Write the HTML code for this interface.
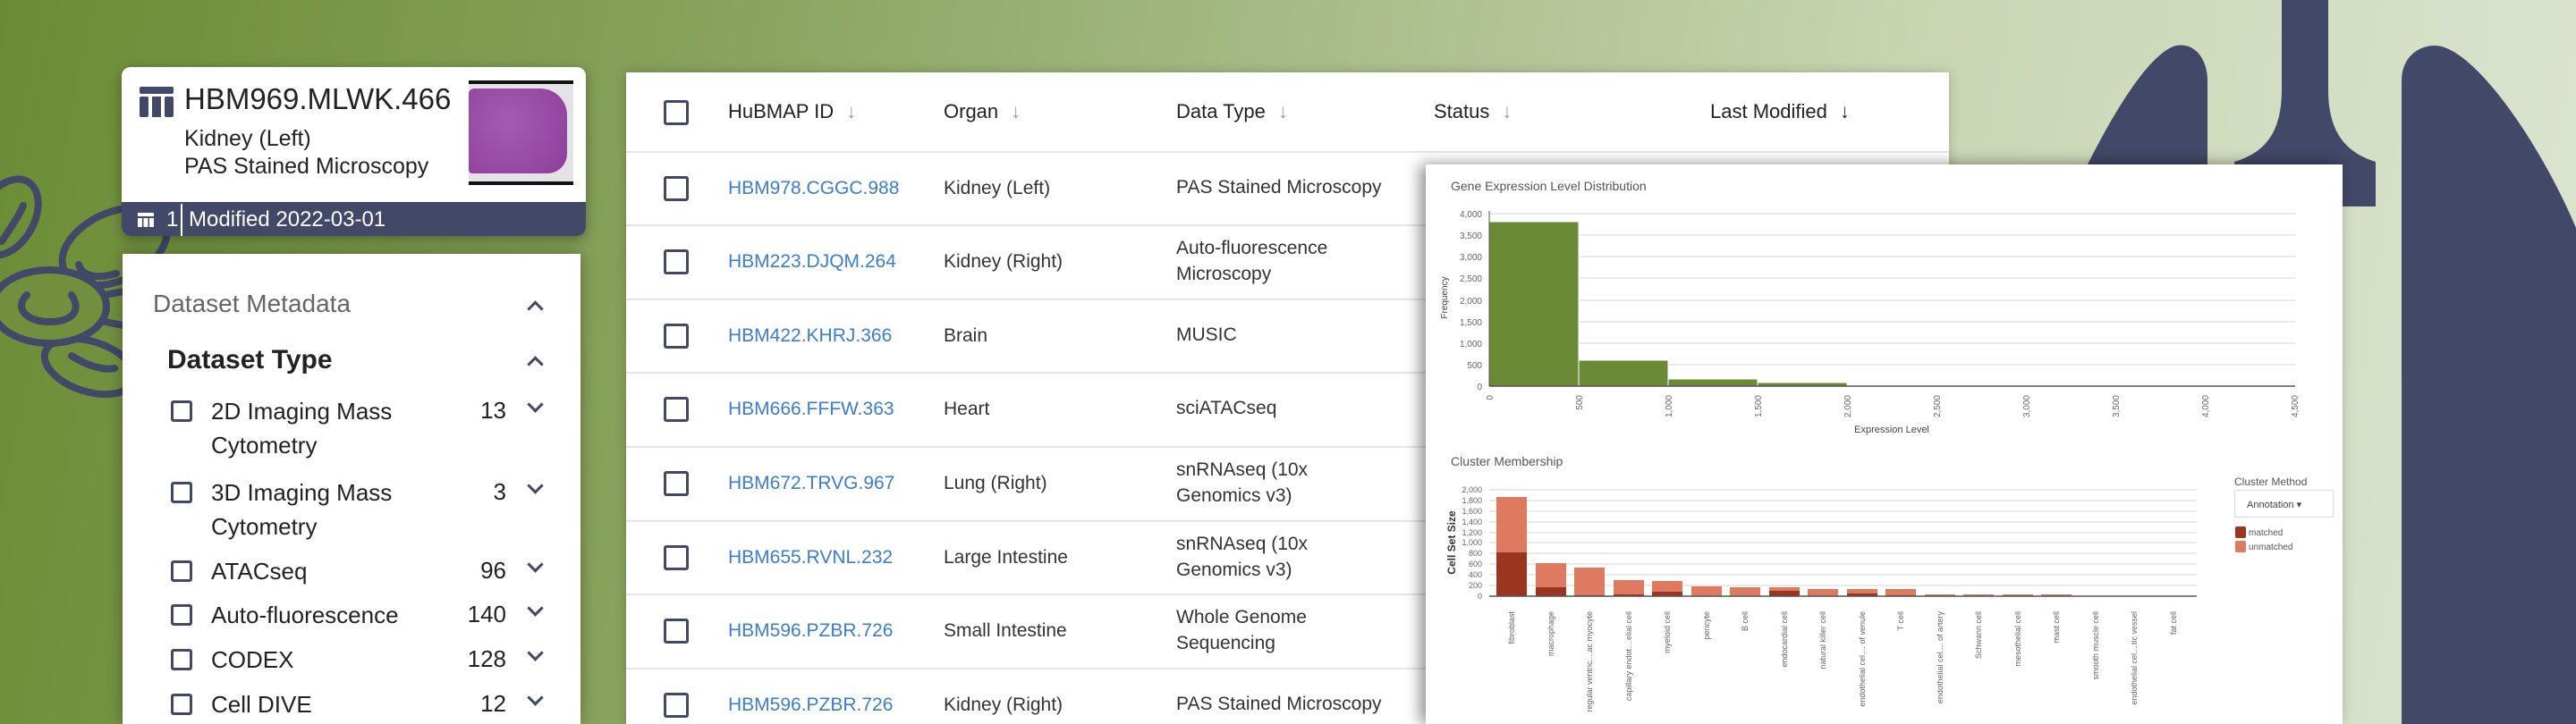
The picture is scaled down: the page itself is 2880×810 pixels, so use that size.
<!DOCTYPE html>
<html style="width:2880px;height:810px;overflow:hidden"><head><meta charset="utf-8">
<style>
*{margin:0;padding:0;box-sizing:border-box}
body{width:2880px;height:810px;overflow:hidden;position:relative;font-family:"Liberation Sans",sans-serif;
background:linear-gradient(100deg,#6b8c35 0%,#86a15a 25%,#a9bd8a 50%,#c9d6b3 72%,#dde5d2 100%);}
.abs{position:absolute}
.card{left:136px;top:75px;width:519px;height:189px;background:#fff;border-radius:10px;overflow:hidden;box-shadow:0 4px 14px rgba(0,0,0,.35)}
.bar{position:absolute;left:0;top:151px;width:519px;height:38px;background:#424867;color:#fff;font-size:24px}
.filt{left:137px;top:284px;width:512px;height:526px;background:#fff;box-shadow:0 0 16px rgba(0,0,0,.35)}
.cb{position:absolute;width:24px;height:24px;border:3px solid #424867;border-radius:3px}
.lbl{position:absolute;font-size:26px;color:#222;line-height:38px}
.cnt{position:absolute;font-size:26px;color:#222;right:83px;text-align:right}
.chev{position:absolute;left:455px;width:13px;height:13px;border-right:3px solid #424867;border-bottom:3px solid #424867;transform:rotate(45deg)}
.chevu{position:absolute;left:455px;width:13px;height:13px;border-left:3px solid #424867;border-top:3px solid #424867;transform:rotate(45deg)}
.table{left:700px;top:81px;width:1479px;height:729px;background:#fff;box-shadow:0 0 12px rgba(0,0,0,.2);overflow:hidden}
.th{position:absolute;top:31px;font-size:22px;color:#222}
.th span{color:#999;margin-left:14px}
.row{position:absolute;left:0;width:1479px;height:83px;border-top:2px solid #e6e6e6;font-size:21px;color:#333}
.row div{position:absolute}
.row .id{left:114px;color:#3a7dd1}
.row .org{left:355px}
.row .dt{left:615px;line-height:29px}
.tcb{position:absolute;left:42px;width:28px;height:28px;border:3px solid #424867;border-radius:3px}
.chart{left:1594px;top:184px;width:1025px;height:626px;background:#fff;box-shadow:-6px 0 16px rgba(0,0,0,.45)}
</style></head><body>

<svg class="abs" style="left:0;top:0" width="2880" height="810" viewBox="0 0 2880 810">
 <g fill="#424867">
  <path d="M2270,330 C2320,200 2390,62 2433,51 C2455,47 2468,68 2468,90 L2468,810 L2250,810 Z"/>
  <path d="M2551,0 L2603,0 L2603,100 C2603,145 2620,170 2656,181 L2656,231 L2498,231 L2498,181 C2535,170 2551,145 2551,100 Z"/>
  <path d="M2685,90 C2685,65 2703,51 2722,51 C2765,51 2840,160 2880,255 L2880,810 L2685,810 Z"/>
 </g>
 <g fill="none" stroke="#424867" stroke-width="8" stroke-linecap="round">
  <ellipse cx="8" cy="243" rx="30" ry="46" transform="rotate(30 8 243)"/>
  <path d="M2,270 C12,255 22,240 26,230"/>
  <ellipse cx="128" cy="276" rx="62" ry="38" transform="rotate(-25 128 276)"/>
  <path d="M88,296 C92,310 110,312 130,306"/>
  <ellipse cx="100" cy="410" rx="52" ry="28" transform="rotate(18 100 410)"/>
  <path d="M80,398 C95,408 115,415 128,412"/>
  <ellipse cx="55" cy="343" rx="64" ry="41" fill="#718f3d"/>
  <path d="M30,330 C15,345 30,360 55,360 C80,360 92,348 80,330"/>
  <path d="M118,330 C140,325 165,322 180,322"/>
  <path d="M118,360 C140,365 160,368 180,368"/>
  <path d="M150,290 C165,285 178,288 182,300"/>
 </g>
</svg>

<div class="abs card">
 <svg class="abs" style="left:20px;top:22px" width="38" height="34" viewBox="0 0 38 34"><rect x="0" y="0" width="38" height="8" rx="2" fill="#424867"/><rect x="0" y="11" width="10" height="23" rx="2" fill="#424867"/><rect x="14" y="11" width="10" height="23" fill="#424867"/><rect x="28" y="11" width="10" height="23" rx="2" fill="#424867"/></svg>
 <div class="abs" style="left:70px;top:17px;font-size:33px;color:#222">HBM969.MLWK.466</div>
 <div class="abs" style="left:70px;top:66px;font-size:25px;color:#222">Kidney (Left)</div>
 <div class="abs" style="left:70px;top:97px;font-size:25px;color:#222">PAS Stained Microscopy</div>
 <div class="abs" style="left:388px;top:15px;width:117px;height:117px;background:#e4e2e6;border-top:4px solid #111;border-bottom:4px solid #111">
  <div class="abs" style="left:0;top:5px;width:110px;height:95px;background:radial-gradient(circle at 40% 40%,#a45bb0,#8d3f9b);border-radius:6px 30px 22px 4px"></div>
 </div>
 <div class="bar">
  <svg class="abs" style="left:18px;top:12px" width="18" height="16" viewBox="0 0 18 16"><rect width="18" height="4" fill="#fff"/><rect y="6" width="5" height="10" fill="#fff"/><rect x="6.5" y="6" width="5" height="10" fill="#fff"/><rect x="13" y="6" width="5" height="10" fill="#fff"/></svg>
  <div class="abs" style="left:50px;top:6px">1</div>
  <div class="abs" style="left:66px;top:2px;width:2px;height:36px;background:#fff"></div>
  <div class="abs" style="left:75px;top:6px">Modified 2022-03-01</div>
 </div>
</div>

<div class="abs filt">
 <div class="abs" style="left:34px;top:40px;font-size:28px;color:#666">Dataset Metadata</div>
 <div class="chevu" style="top:55px"></div>
 <div class="abs" style="left:50px;top:102px;font-size:30px;color:#222;font-weight:bold">Dataset Type</div>
 <div class="chevu" style="top:117px"></div>
 <div class="cb" style="left:54px;top:164px"></div><div class="lbl" style="left:99px;top:157px">2D Imaging Mass<br>Cytometry</div><div class="cnt" style="top:160px">13</div><div class="chev" style="top:162px"></div>
 <div class="cb" style="left:54px;top:255px"></div><div class="lbl" style="left:99px;top:248px">3D Imaging Mass<br>Cytometry</div><div class="cnt" style="top:251px">3</div><div class="chev" style="top:253px"></div>
 <div class="cb" style="left:54px;top:343px"></div><div class="lbl" style="left:99px;top:336px">ATACseq</div><div class="cnt" style="top:339px">96</div><div class="chev" style="top:341px"></div>
 <div class="cb" style="left:54px;top:392px"></div><div class="lbl" style="left:99px;top:385px">Auto-fluorescence</div><div class="cnt" style="top:388px">140</div><div class="chev" style="top:390px"></div>
 <div class="cb" style="left:54px;top:442px"></div><div class="lbl" style="left:99px;top:435px">CODEX</div><div class="cnt" style="top:438px">128</div><div class="chev" style="top:440px"></div>
 <div class="cb" style="left:54px;top:492px"></div><div class="lbl" style="left:99px;top:485px">Cell DIVE</div><div class="cnt" style="top:488px">12</div><div class="chev" style="top:490px"></div>
</div>

<div class="abs table">
 <div class="tcb" style="top:31px"></div>
 <div class="th" style="left:114px">HuBMAP ID<span>↓</span></div>
 <div class="th" style="left:355px">Organ<span>↓</span></div>
 <div class="th" style="left:615px">Data Type<span>↓</span></div>
 <div class="th" style="left:903px">Status<span>↓</span></div>
 <div class="th" style="left:1212px">Last Modified<span style="color:#222">↓</span></div>
 <div class="row" style="top:88px"><div class="tcb" style="top:26px"></div><div class="id" style="top:28px">HBM978.CGGC.988</div><div class="org" style="top:28px">Kidney (Left)</div><div class="dt" style="top:24px">PAS Stained Microscopy</div></div>
 <div class="row" style="top:170px"><div class="tcb" style="top:26px"></div><div class="id" style="top:28px">HBM223.DJQM.264</div><div class="org" style="top:28px">Kidney (Right)</div><div class="dt" style="top:10px">Auto-fluorescence<br>Microscopy</div></div>
 <div class="row" style="top:253px"><div class="tcb" style="top:26px"></div><div class="id" style="top:28px">HBM422.KHRJ.366</div><div class="org" style="top:28px">Brain</div><div class="dt" style="top:24px">MUSIC</div></div>
 <div class="row" style="top:335px"><div class="tcb" style="top:26px"></div><div class="id" style="top:28px">HBM666.FFFW.363</div><div class="org" style="top:28px">Heart</div><div class="dt" style="top:24px">sciATACseq</div></div>
 <div class="row" style="top:418px"><div class="tcb" style="top:26px"></div><div class="id" style="top:28px">HBM672.TRVG.967</div><div class="org" style="top:28px">Lung (Right)</div><div class="dt" style="top:10px">snRNAseq (10x<br>Genomics v3)</div></div>
 <div class="row" style="top:501px"><div class="tcb" style="top:26px"></div><div class="id" style="top:28px">HBM655.RVNL.232</div><div class="org" style="top:28px">Large Intestine</div><div class="dt" style="top:10px">snRNAseq (10x<br>Genomics v3)</div></div>
 <div class="row" style="top:583px"><div class="tcb" style="top:26px"></div><div class="id" style="top:28px">HBM596.PZBR.726</div><div class="org" style="top:28px">Small Intestine</div><div class="dt" style="top:10px">Whole Genome<br>Sequencing</div></div>
 <div class="row" style="top:666px"><div class="tcb" style="top:26px"></div><div class="id" style="top:28px">HBM596.PZBR.726</div><div class="org" style="top:28px">Kidney (Right)</div><div class="dt" style="top:24px">PAS Stained Microscopy</div></div>
</div>

<div class="abs chart"></div>
<svg class="abs" style="left:0;top:0" width="2880" height="810" viewBox="0 0 2880 810" font-family="Liberation Sans, sans-serif">
 <text x="1622" y="213" font-size="14" fill="#555">Gene Expression Level Distribution</text>
 <g stroke="#e3e3e3" stroke-width="1.5">
  <line x1="1665" x2="2566" y1="239" y2="239"/><line x1="1665" x2="2566" y1="263" y2="263"/><line x1="1665" x2="2566" y1="287" y2="287"/><line x1="1665" x2="2566" y1="311" y2="311"/><line x1="1665" x2="2566" y1="336" y2="336"/><line x1="1665" x2="2566" y1="360" y2="360"/><line x1="1665" x2="2566" y1="384" y2="384"/><line x1="1665" x2="2566" y1="408" y2="408"/>
 </g>
 <g fill="#6b8a35" stroke="#fff" stroke-width="1">
  <rect x="1665" y="248" width="100" height="184"/><rect x="1765" y="403" width="100" height="29"/><rect x="1865" y="424" width="100" height="8"/><rect x="1965" y="428" width="100" height="4"/><rect x="2065" y="431" width="100" height="1"/>
 </g>
 <line x1="1665" x2="2566" y1="432" y2="432" stroke="#555" stroke-width="1.5"/>
 <line x1="1665" x2="1665" y1="236" y2="432" stroke="#555" stroke-width="1"/>
 <g font-size="10" fill="#666" text-anchor="end">
  <text x="1657" y="243">4,000</text><text x="1657" y="267">3,500</text><text x="1657" y="291">3,000</text><text x="1657" y="315">2,500</text><text x="1657" y="340">2,000</text><text x="1657" y="364">1,500</text><text x="1657" y="388">1,000</text><text x="1657" y="412">500</text><text x="1657" y="436">0</text>
 </g>
 <g font-size="10" fill="#666" text-anchor="end">
  <text transform="translate(1665,442) rotate(-90)" x="0" y="4">0</text>
  <text transform="translate(1765,442) rotate(-90)" x="0" y="4">500</text>
  <text transform="translate(1865,442) rotate(-90)" x="0" y="4">1,000</text>
  <text transform="translate(1965,442) rotate(-90)" x="0" y="4">1,500</text>
  <text transform="translate(2065,442) rotate(-90)" x="0" y="4">2,000</text>
  <text transform="translate(2165,442) rotate(-90)" x="0" y="4">2,500</text>
  <text transform="translate(2265,442) rotate(-90)" x="0" y="4">3,000</text>
  <text transform="translate(2365,442) rotate(-90)" x="0" y="4">3,500</text>
  <text transform="translate(2465,442) rotate(-90)" x="0" y="4">4,000</text>
  <text transform="translate(2565,442) rotate(-90)" x="0" y="4">4,500</text>
 </g>
 <text x="2115" y="484" font-size="11" fill="#444" text-anchor="middle">Expression Level</text>
 <text transform="translate(1618,333) rotate(-90)" font-size="10" fill="#444" text-anchor="middle">Frequency</text>

 <text x="1622" y="521" font-size="14" fill="#555">Cluster Membership</text>
 <g stroke="#e3e3e3" stroke-width="1.5">
  <line x1="1665" x2="2456" y1="548" y2="548"/><line x1="1665" x2="2456" y1="560" y2="560"/><line x1="1665" x2="2456" y1="572" y2="572"/><line x1="1665" x2="2456" y1="584" y2="584"/><line x1="1665" x2="2456" y1="596" y2="596"/><line x1="1665" x2="2456" y1="607" y2="607"/><line x1="1665" x2="2456" y1="619" y2="619"/><line x1="1665" x2="2456" y1="631" y2="631"/><line x1="1665" x2="2456" y1="643" y2="643"/><line x1="1665" x2="2456" y1="655" y2="655"/>
 </g>
 <g font-size="9" fill="#666" text-anchor="end">
  <text x="1657" y="551">2,000</text><text x="1657" y="563">1,800</text><text x="1657" y="575">1,600</text><text x="1657" y="587">1,400</text><text x="1657" y="599">1,200</text><text x="1657" y="610">1,000</text><text x="1657" y="622">800</text><text x="1657" y="634">600</text><text x="1657" y="646">400</text><text x="1657" y="658">200</text><text x="1657" y="670">0</text>
 </g>
 <text transform="translate(1627,607) rotate(-90)" font-size="12" font-weight="bold" fill="#333" text-anchor="middle">Cell Set Size</text>
 <g fill="#de7a60">
  <rect x="1673" y="556" width="34" height="111"/><rect x="1717" y="630" width="34" height="37"/><rect x="1760" y="635" width="34" height="32"/><rect x="1804" y="649" width="34" height="18"/><rect x="1847" y="650" width="34" height="17"/><rect x="1891" y="656" width="34" height="11"/><rect x="1934" y="657" width="34" height="10"/><rect x="1978" y="657" width="34" height="10"/><rect x="2021" y="659" width="34" height="8"/><rect x="2065" y="659" width="34" height="8"/><rect x="2108" y="659" width="34" height="8"/><rect x="2152" y="665" width="34" height="2"/><rect x="2195" y="665" width="34" height="2"/><rect x="2239" y="665" width="34" height="2"/><rect x="2282" y="665" width="34" height="2"/>
 </g>
 <g fill="#9a3520">
  <rect x="1673" y="618" width="34" height="49"/><rect x="1717" y="657" width="34" height="10"/><rect x="1760" y="666" width="34" height="1"/><rect x="1804" y="665" width="34" height="2"/><rect x="1847" y="662" width="34" height="5"/><rect x="1978" y="661" width="34" height="6"/><rect x="2065" y="664" width="34" height="3"/><rect x="2108" y="666" width="34" height="1"/>
 </g>
 <line x1="1665" x2="2456" y1="667" y2="667" stroke="#555" stroke-width="1.5"/>
 <g font-size="9" fill="#666" text-anchor="end">
  <text transform="translate(1690,684) rotate(-90)" y="3">fibroblast</text>
  <text transform="translate(1734,684) rotate(-90)" y="3">macrophage</text>
  <text transform="translate(1777,684) rotate(-90)" y="3">regular ventric....ac myocyte</text>
  <text transform="translate(1821,684) rotate(-90)" y="3">capillary endot....elial cell</text>
  <text transform="translate(1864,684) rotate(-90)" y="3">myeloid cell</text>
  <text transform="translate(1908,684) rotate(-90)" y="3">pericyte</text>
  <text transform="translate(1951,684) rotate(-90)" y="3">B cell</text>
  <text transform="translate(1995,684) rotate(-90)" y="3">endocardial cell</text>
  <text transform="translate(2038,684) rotate(-90)" y="3">natural killer cell</text>
  <text transform="translate(2082,684) rotate(-90)" y="3">endothelial cel.... of venule</text>
  <text transform="translate(2125,684) rotate(-90)" y="3">T cell</text>
  <text transform="translate(2169,684) rotate(-90)" y="3">endothelial cel.... of artery</text>
  <text transform="translate(2212,684) rotate(-90)" y="3">Schwann cell</text>
  <text transform="translate(2256,684) rotate(-90)" y="3">mesothelial cell</text>
  <text transform="translate(2299,684) rotate(-90)" y="3">mast cell</text>
  <text transform="translate(2343,684) rotate(-90)" y="3">smooth muscle cell</text>
  <text transform="translate(2386,684) rotate(-90)" y="3">endothelial cel....tic vessel</text>
  <text transform="translate(2430,684) rotate(-90)" y="3">fat cell</text>
 </g>
 <text x="2498" y="543" font-size="12" fill="#555">Cluster Method</text>
 <rect x="2498.5" y="548.5" width="110" height="30" fill="#fff" stroke="#ddd"/>
 <text x="2512" y="568" font-size="11" fill="#444">Annotation ▾</text>
 <rect x="2499" y="589" width="12" height="13" rx="2" fill="#9a3520"/><text x="2514" y="599" font-size="10" fill="#555">matched</text>
 <rect x="2499" y="605" width="12" height="13" rx="2" fill="#de7a60"/><text x="2514" y="615" font-size="10" fill="#555">unmatched</text>
</svg>
</body></html>
